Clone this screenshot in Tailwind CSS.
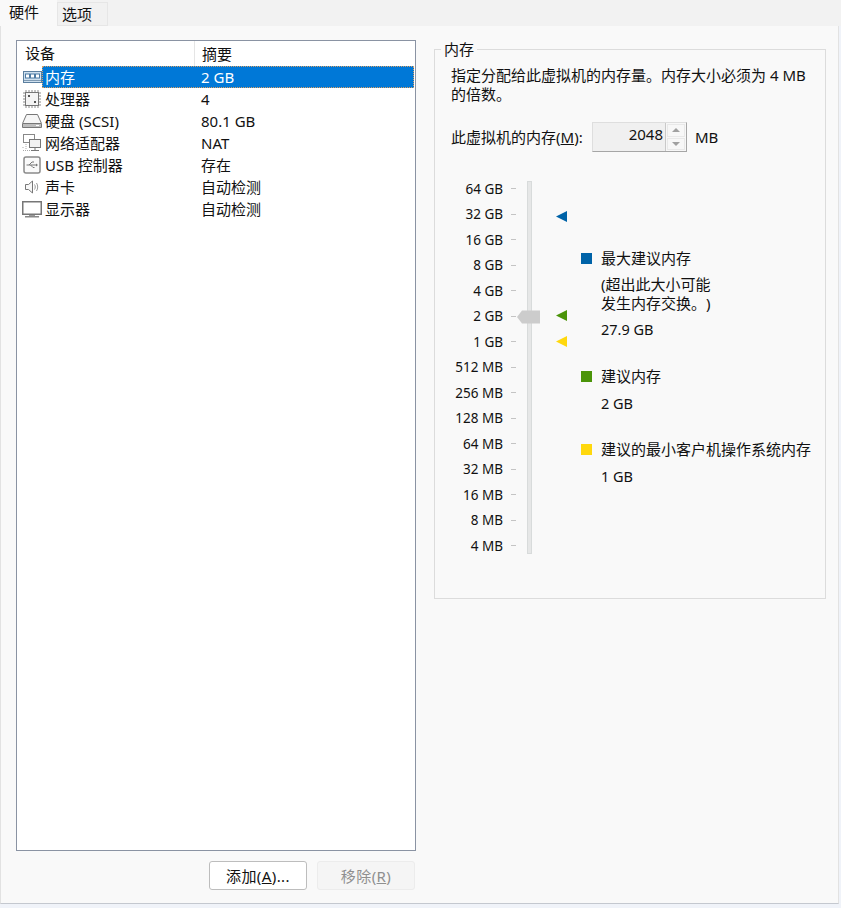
<!DOCTYPE html>
<html lang="zh-CN">
<head>
<meta charset="UTF-8">
<title>虚拟机设置</title>
<script src="https://cdn.jsdelivr.net/npm/@tailwindcss/browser@4"></script>
</head>
<body class="w-[841px] h-[908px] overflow-hidden bg-[#f0f3f9] font-['Noto_Sans','Noto_Sans_CJK_SC',sans-serif] text-[15px] leading-[22px] text-[#111] [text-spacing-trim:space-all]">
  <!-- tabs -->
  <div class="relative z-10 flex h-[26px] items-start bg-[#f2f2f2]">
    <div class="h-[26px] w-[57px] bg-[#f9f9f9] pl-[9px] pt-px">硬件</div>
    <div class="mt-[2px] h-[24px] w-[51px] border border-[#e6e6e6] bg-[#f1f1f1] pl-[4px]">选项</div>
  </div>
  <!-- panel -->
  <div class="flex h-[878px] w-[839px] gap-[18px] border-x border-b border-[#c4c8cf] bg-[#f9f9f9] pl-[15px] pt-[14px] border-x-[#e2e2e2]">
    <!-- left column -->
    <div class="w-[400px]">
      <div class="h-[811px] border border-[#8a93a3] bg-white">
        <div class="flex h-[25px] items-center">
          <div class="h-full w-[178px] border-r border-[#e5e5e5] pl-[8px] pt-px">设备</div>
          <div class="pl-[7px] pt-px">摘要</div>
        </div>
        <div class="flex h-[22px] items-center">
          <div class="flex w-[25px] justify-end pl-[6px]">
            <svg width="19" height="13" viewBox="0 0 19 13"><rect x="0.5" y="0.5" width="18" height="11" fill="#cfe0ee" stroke="#5c7f9f"/><rect x="2.5" y="3" width="4" height="4" fill="#fff" stroke="#4d7aa3"/><rect x="7.500" y="3" width="4" height="4" fill="#fff" stroke="#4d7aa3"/><rect x="12.500" y="3" width="4" height="4" fill="#fff" stroke="#4d7aa3"/><path d="M1 9.500h17" stroke="#7f9ab3"/></svg>
          </div>
          <div class="flex h-[22px] w-[372px] items-center border border-dotted border-[#d9a066] bg-[#0078d7] text-white">
            <div class="w-[158px] pl-[2px]">内存</div><div>2 GB</div>
          </div>
        </div>
        <div class="flex h-[22px] items-center">
          <div class="flex w-[27px] justify-center pl-[2px]">
            <svg width="20" height="20" viewBox="0 0 20 20" fill="none"><rect x="3.5" y="3.5" width="13" height="13" fill="#f4f4f4" stroke="#777"/><path d="M4 1v2M7 1v2M10 1v2M13 1v2M16 1v2M4 17v2M7 17v2M10 17v2M13 17v2M16 17v2M1 4h2M1 7h2M1 10h2M1 13h2M1 16h2M17 4h2M17 7h2M17 10h2M17 13h2M17 16h2" stroke="#8a8a8a"/><rect x="6" y="6" width="2" height="2" fill="#555"/><rect x="12" y="12" width="2" height="2" fill="#555"/></svg>
          </div>
          <div class="w-[157px] pl-px">处理器</div><div>4</div>
        </div>
        <div class="flex h-[22px] items-center">
          <div class="flex w-[27px] justify-center pl-[2px]">
            <svg width="20" height="16" viewBox="0 0 20 16" fill="none"><path d="M4.5 1.5h11l4 9v4h-19v-4z" fill="#f6f6f6" stroke="#777"/><path d="M1 10.5h18" stroke="#777"/><rect x="1" y="11" width="18" height="3" fill="#bdbdbd"/><path d="M14 12.5h3" stroke="#fff"/></svg>
          </div>
          <div class="w-[157px] pl-px">硬盘 (SCSI)</div><div>80.1 GB</div>
        </div>
        <div class="flex h-[22px] items-center">
          <div class="flex w-[27px] justify-center pl-[2px]">
            <svg width="20" height="20" viewBox="0 0 20 20" fill="none"><rect x="1.5" y="1.5" width="11" height="8" fill="#fff" stroke="#888"/><rect x="7.5" y="6.5" width="11" height="8" fill="#f2f2f2" stroke="#777"/><path d="M13 15v2M9 17.5h8" stroke="#777"/><path d="M1 17.5h7M1 14v1M4 11v5" stroke="#aaa" stroke-dasharray="1 1"/></svg>
          </div>
          <div class="w-[157px] pl-px">网络适配器</div><div>NAT</div>
        </div>
        <div class="flex h-[22px] items-center">
          <div class="flex w-[27px] justify-center pl-[2px]">
            <svg width="18" height="18" viewBox="0 0 18 18" fill="none"><rect x="1" y="1" width="16" height="16" rx="2" fill="#fafafa" stroke="#8a8a8a" stroke-width="1.5"/><path d="M3.5 9h10M6 9l3-3h2M7.5 9l2.5 2.5h1.5" stroke="#777"/><path d="M13 7.5l2 1.5-2 1.5z" fill="#777"/></svg>
          </div>
          <div class="w-[157px] pl-px">USB 控制器</div><div>存在</div>
        </div>
        <div class="flex h-[22px] items-center">
          <div class="flex w-[27px] justify-center pl-[2px]">
            <svg width="16" height="16" viewBox="0 0 16 16" fill="none"><path d="M1.5 5.5h3l4-3.5v12l-4-3.5h-3z" fill="#f7f7f7" stroke="#777"/><path d="M10.5 5.5c1 1.500 1 3.500 0 5M12.500 4c1.600 2.500 1.600 5.500 0 8" stroke="#999"/></svg>
          </div>
          <div class="w-[157px] pl-px">声卡</div><div>自动检测</div>
        </div>
        <div class="flex h-[22px] items-center">
          <div class="flex w-[27px] justify-center pl-[2px]">
            <svg width="20" height="17" viewBox="0 0 20 17" fill="none"><rect x="0.750" y="0.750" width="18.500" height="12.500" fill="#fff" stroke="#777" stroke-width="1.500"/><rect x="7" y="14" width="6" height="1" fill="#999"/><rect x="3" y="15" width="14" height="1.500" fill="#888"/></svg>
          </div>
          <div class="w-[157px] pl-px">显示器</div><div>自动检测</div>
        </div>
      </div>
      <div class="mt-[10px] flex justify-end gap-[10px] pr-px">
        <div class="flex h-[29px] w-[98px] items-center justify-center rounded-[3px] border border-[#bdbdbd] bg-white tracking-[0.4px]">添加(<span class="underline">A</span>)...</div>
        <div class="flex h-[29px] w-[98px] items-center justify-center rounded-[3px] border border-[#ececec] bg-[#f5f5f5] text-[#8f8f8f] tracking-[0.4px]">移除(<span class="underline">R</span>)</div>
      </div>
    </div>
    <!-- memory group -->
    <div class="relative mt-[9px] h-[550px] w-[392px] border border-[#dcdcdc]">
      <div class="absolute left-[6px] top-[-12px] bg-[#f9f9f9] px-[3px]">内存</div>
      <div class="w-[375px] pl-[16px] pt-[16px] leading-[19px]">指定分配给此虚拟机的内存量。内存大小必须为 4 MB 的倍数。</div>
      <div class="mt-[18px] flex h-[30px] items-center pl-[16px]">
        <div class="w-[141px]">此虚拟机的内存(<span class="underline">M</span>):</div>
        <div class="flex h-[30px] w-[95px] border border-[#dedede] border-b-[#a6a6a6] border-r-[#a6a6a6] bg-[#f0f0f0]">
          <div class="w-[72px] pr-[2px] text-right">2048</div>
          <div class="flex w-[21px] flex-col items-center gap-px border-l border-[#c9c9c9] bg-[#f7f7f7] px-px py-px">
            <div class="flex flex-1 w-full items-center justify-center border border-[#e8e8e8]"><div class="h-0 w-0 border-x-[4px] border-b-[4px] border-x-transparent border-b-[#a0a0a0]"></div></div>
            <div class="flex flex-1 w-full items-center justify-center border border-[#e8e8e8]"><div class="h-0 w-0 border-x-[4px] border-t-[4px] border-x-transparent border-t-[#a0a0a0]"></div></div>
          </div>
        </div>
        <div class="pl-[8px]">MB</div>
      </div>
      <div class="mt-[29px] flex pl-[16px]">
        <!-- scale -->
        <div class="relative w-[130px] h-[373px]">
          <div class="-mt-[5px] text-[13.5px]">
            <div class="flex h-[25.5px] items-center"><div class="w-[52px] text-right">64 GB</div><div class="ml-[8px] h-px w-[5px] bg-[#c4c4c4]"></div></div>
            <div class="flex h-[25.5px] items-center"><div class="w-[52px] text-right">32 GB</div><div class="ml-[8px] h-px w-[5px] bg-[#c4c4c4]"></div></div>
            <div class="flex h-[25.5px] items-center"><div class="w-[52px] text-right">16 GB</div><div class="ml-[8px] h-px w-[5px] bg-[#c4c4c4]"></div></div>
            <div class="flex h-[25.5px] items-center"><div class="w-[52px] text-right">8 GB</div><div class="ml-[8px] h-px w-[5px] bg-[#c4c4c4]"></div></div>
            <div class="flex h-[25.5px] items-center"><div class="w-[52px] text-right">4 GB</div><div class="ml-[8px] h-px w-[5px] bg-[#c4c4c4]"></div></div>
            <div class="flex h-[25.5px] items-center"><div class="w-[52px] text-right">2 GB</div><div class="ml-[8px] h-px w-[5px] bg-[#c4c4c4]"></div></div>
            <div class="flex h-[25.5px] items-center"><div class="w-[52px] text-right">1 GB</div><div class="ml-[8px] h-px w-[5px] bg-[#c4c4c4]"></div></div>
            <div class="flex h-[25.5px] items-center"><div class="w-[52px] text-right">512 MB</div><div class="ml-[8px] h-px w-[5px] bg-[#c4c4c4]"></div></div>
            <div class="flex h-[25.5px] items-center"><div class="w-[52px] text-right">256 MB</div><div class="ml-[8px] h-px w-[5px] bg-[#c4c4c4]"></div></div>
            <div class="flex h-[25.5px] items-center"><div class="w-[52px] text-right">128 MB</div><div class="ml-[8px] h-px w-[5px] bg-[#c4c4c4]"></div></div>
            <div class="flex h-[25.5px] items-center"><div class="w-[52px] text-right">64 MB</div><div class="ml-[8px] h-px w-[5px] bg-[#c4c4c4]"></div></div>
            <div class="flex h-[25.5px] items-center"><div class="w-[52px] text-right">32 MB</div><div class="ml-[8px] h-px w-[5px] bg-[#c4c4c4]"></div></div>
            <div class="flex h-[25.5px] items-center"><div class="w-[52px] text-right">16 MB</div><div class="ml-[8px] h-px w-[5px] bg-[#c4c4c4]"></div></div>
            <div class="flex h-[25.5px] items-center"><div class="w-[52px] text-right">8 MB</div><div class="ml-[8px] h-px w-[5px] bg-[#c4c4c4]"></div></div>
            <div class="flex h-[25.5px] items-center"><div class="w-[52px] text-right">4 MB</div><div class="ml-[8px] h-px w-[5px] bg-[#c4c4c4]"></div></div>
          </div>
          <!-- track, thumb and markers lie over the scale -->
          <div class="absolute left-[76px] top-0 h-[373px] w-[5px] border border-[#d8dbdb] bg-[#e6e7e7]"></div>
          <svg class="absolute left-[66px] top-[129px]" width="24" height="14" viewBox="0 0 24 14"><path d="M0 7l5-6.500h18v13h-18z" fill="#cccccc"/></svg>
          <svg class="absolute left-[105px] top-[30px]" width="12" height="11" viewBox="0 0 12 11"><path d="M0 5.500l11-5.500v11z" fill="#0063a8"/></svg>
          <svg class="absolute left-[105px] top-[129px]" width="12" height="11" viewBox="0 0 12 11"><path d="M0 5.500l11-5.500v11z" fill="#4b9409"/></svg>
          <svg class="absolute left-[105px] top-[155px]" width="12" height="11" viewBox="0 0 12 11"><path d="M0 5.500l11-5.500v11z" fill="#ffd80d"/></svg>
        </div>
        <!-- legend -->
        <div class="pt-[66px]">
          <div class="flex h-[22px] items-center"><div class="h-[11px] w-[11px] bg-[#0063a8]"></div><div class="pl-[9px]">最大建议内存</div></div>
          <div class="mt-[6px] pl-[20px] leading-[19px]">(超出此大小可能<br>发生内存交换。)</div>
          <div class="mt-[5px] pl-[20px] text-[14.5px]">27.9 GB</div>
          <div class="mt-[25px] flex h-[22px] items-center"><div class="h-[11px] w-[11px] bg-[#4b9409]"></div><div class="pl-[9px]">建议内存</div></div>
          <div class="mt-[5px] pl-[20px] text-[14.5px]">2 GB</div>
          <div class="mt-[24px] flex h-[22px] items-center"><div class="h-[11px] w-[11px] bg-[#ffd80d]"></div><div class="pl-[9px]">建议的最小客户机操作系统内存</div></div>
          <div class="mt-[5px] pl-[20px] text-[14.5px]">1 GB</div>
        </div>
      </div>
    </div>
  </div>
</body>
</html>
